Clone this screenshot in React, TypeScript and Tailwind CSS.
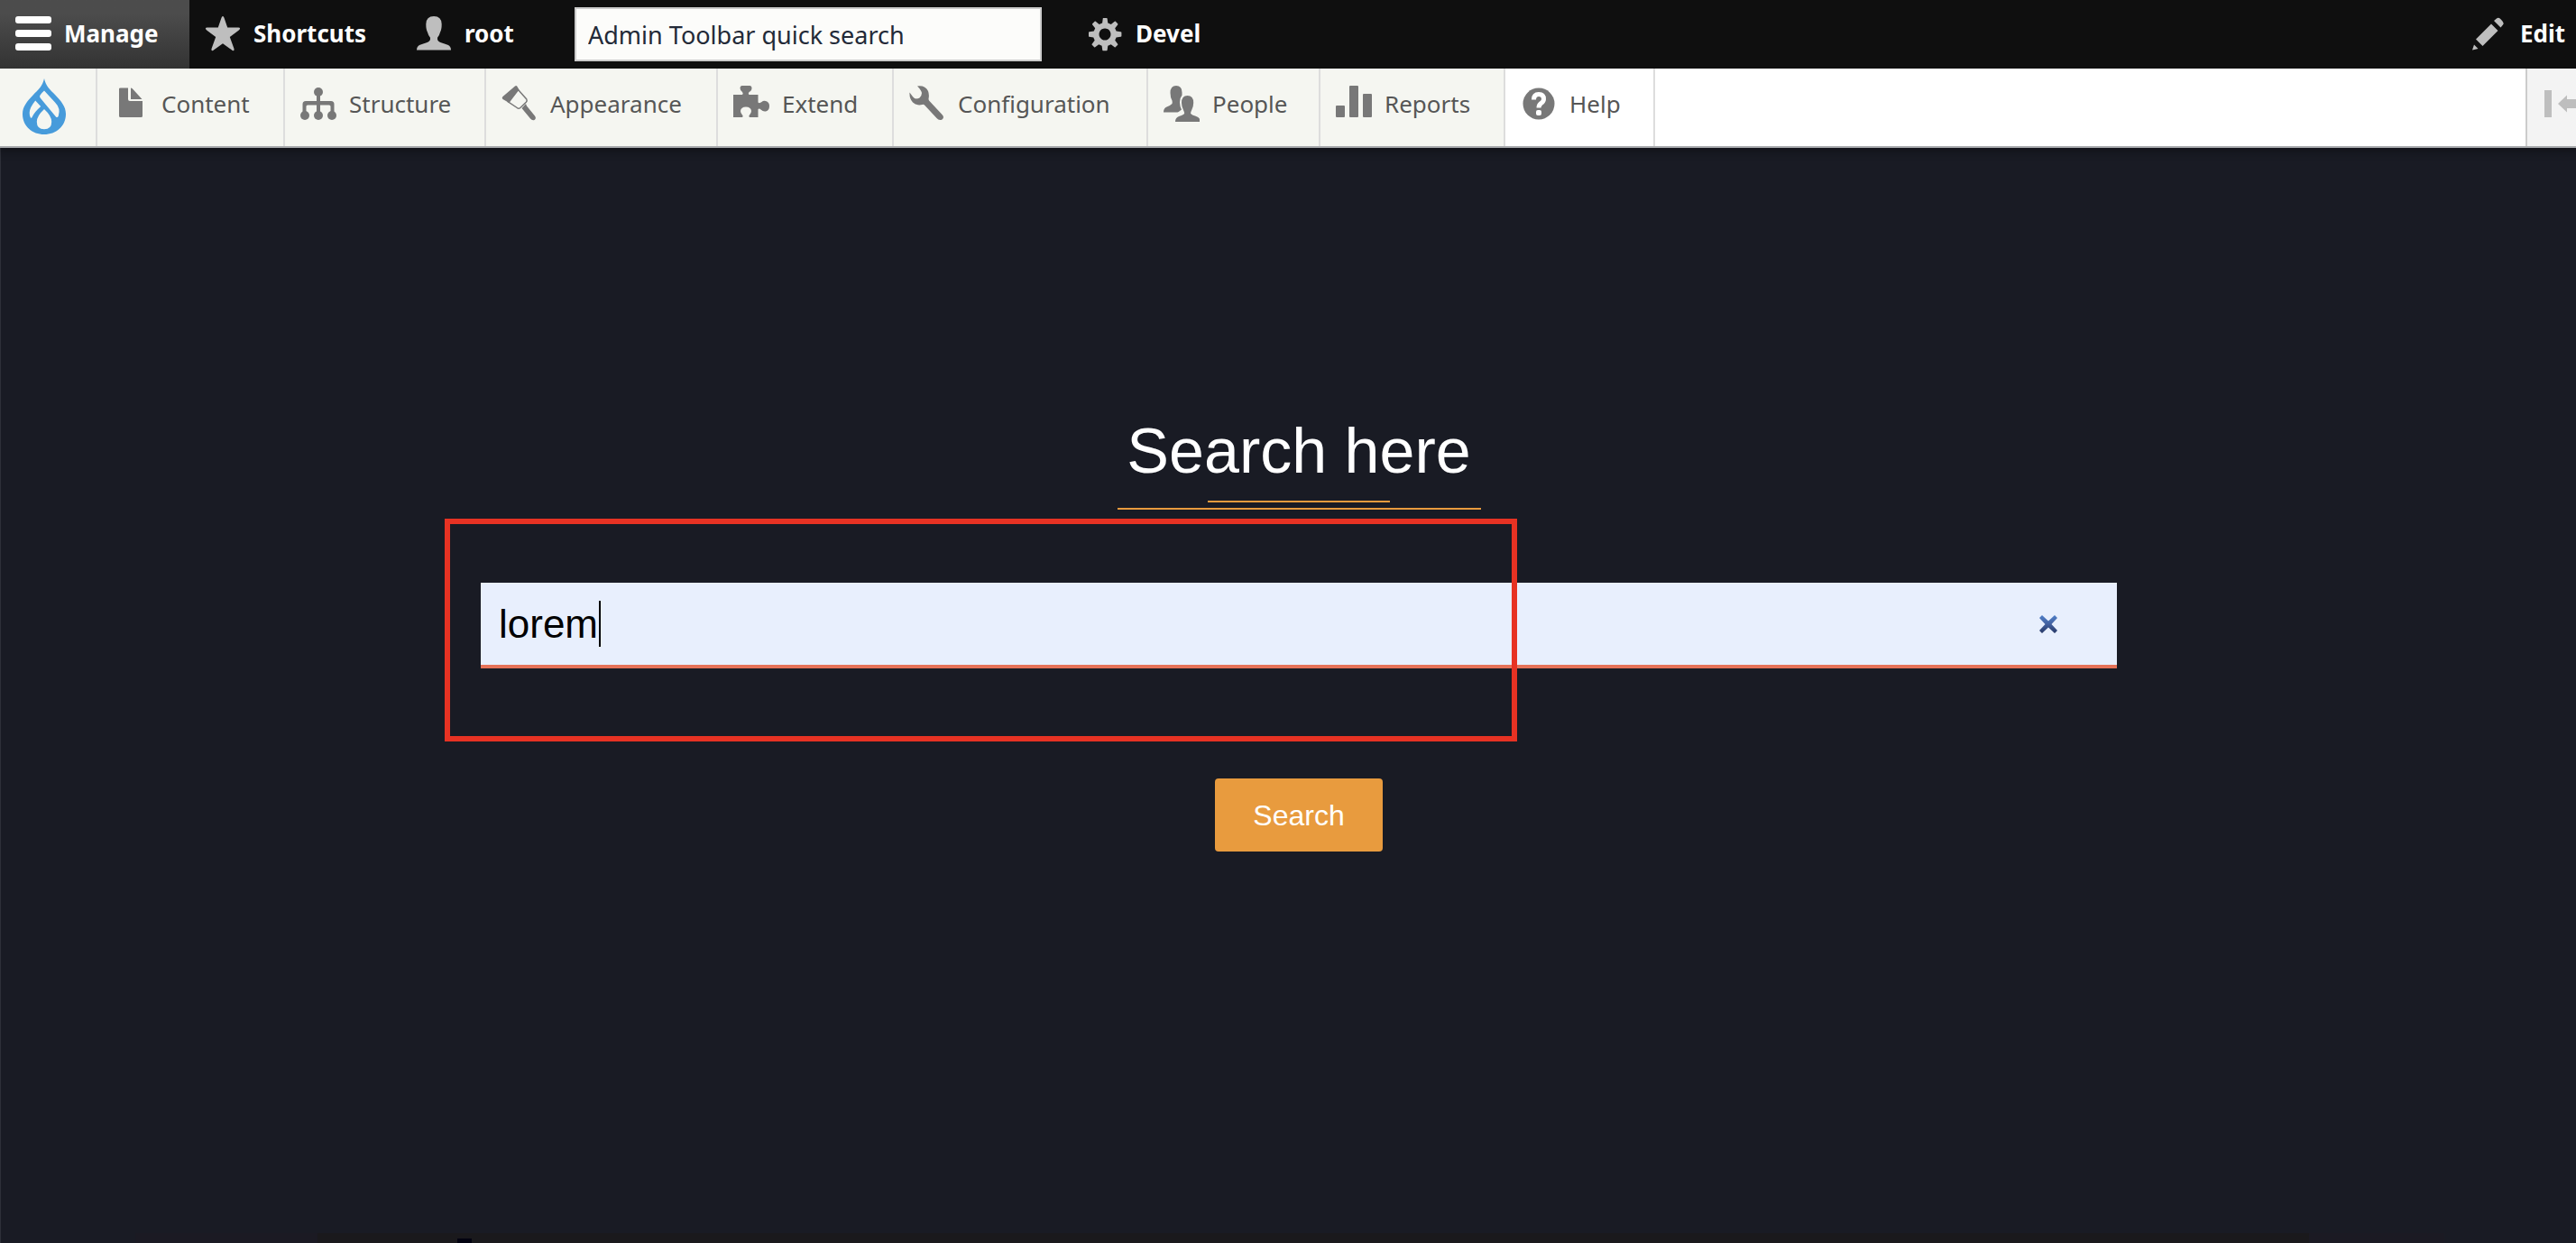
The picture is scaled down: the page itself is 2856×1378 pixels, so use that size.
import React from "react";

const lucida = "font-['Noto_Sans','Open_Sans',sans-serif]";
const helvetica = "font-['Liberation_Sans',Arial,sans-serif]";

function MenuIcon() {
  return (
    <svg className="h-10 w-10" viewBox="0 0 40 40" fill="#fff" aria-hidden="true">
      <rect y="1" width="40" height="8" rx="3" />
      <rect y="16" width="40" height="8" rx="3" />
      <rect y="31" width="40" height="8" rx="3" />
    </svg>
  );
}

function StarIcon() {
  return (
    <svg className="h-10 w-10" viewBox="0 0 40 40" fill="#bebebe" aria-hidden="true">
      <path d="M20 1q1 0 1.600 2l3.600 10.500h12q2.300 0 1.800 1.500q-.2.800-1.500 1.700L27.800 24l4.500 12.500q.6 2-.2 2.500q-.8.500-2.300-.7L20 31.200l-9.800 7.100q-1.500 1.200-2.300.7q-.8-.5-.2-2.500L12.200 24L2.500 16.700Q1.200 15.800 1 15Q.5 13.500 2.800 13.500h12l3.600-10.500q.6-2 1.600-2z" />
    </svg>
  );
}

function PersonIcon() {
  return (
    <svg className="h-10 w-10" viewBox="0 0 40 40" fill="#bebebe" aria-hidden="true">
      <path d="M1 38.500q0-4 3-5.500q3-1.200 8-2.800q4-1.500 4-4v-1.500q-2-2-3-6q-1.700-3-1.700-9Q11.500 1 20 1t8.700 8.700q0 6-1.700 9q-1 4-3 6v1.500q0 2.500 4 4q5 1.600 8 2.800q3 1.500 3 5.500z" />
    </svg>
  );
}

function GearIcon() {
  return (
    <svg className="h-10 w-10" viewBox="0 0 40 40" fill="#bebebe" aria-hidden="true">
      <path
        fillRule="evenodd"
        d="M18 3h4q.6 0 .7 1l.6 4.500 3.500 1.400 4-3.100q.6-.5 1 0l2.400 2.500q.5.500 0 1.100l-3 3.900 1.400 3.200 4.900.700q.9.100.9.800v4q0 .6-.9.700l-4.900.8-1.400 3.300 3 4q.5.600 0 1l-2.500 2.500q-.5.500-1 0l-4-3-3.400 1.400-.6 4.600q-.1 1-.8 1h-4q-.6 0-.7-1l-.6-4.600-3.400-1.400-4 3q-.6.500-1 0l-2.500-2.500q-.5-.5 0-1l3-4-1.400-3.300-4.900-.8Q2 23.600 2 23v-4q0-.7.900-.8l4.900-.7 1.400-3.200-3-3.900q-.5-.6 0-1.100l2.500-2.500q.5-.5 1 0l4 3.100 3.400-1.400.6-4.500q.1-1 .3-1zM20 14.500a6.500 6.500 0 1 0 .01 0z"
      />
    </svg>
  );
}

function PencilIcon() {
  return (
    <svg className="h-10 w-10" viewBox="0 0 40 40" fill="#bebebe" aria-hidden="true">
      <path d="M27 6l3-2.500q2-1.500 4 .3l2.500 2.700q1.800 2 .5 4L34.500 13.500zM24 9.500l7.500 7.500L14.500 34 7 26.500zM5 32.500l4.500 4.500L3 38.500z" />
    </svg>
  );
}

function DropIcon() {
  return (
    <svg className="h-[62px] w-12" viewBox="0 0 48 62" aria-hidden="true">
      <path
        fill="#479bdb"
        d="M24 0C25.500 8 31 13 36 18C43 25.500 48 31 48 39.500C48 53 37 62 24 62S0 53 0 39.500C0 31 5 25.500 12 18C17 13 22.500 8 24 0z"
      />
      <path fill="#f5f6f1" d="M24 13.500Q20.500 16.500 19.200 19q-.6 1.400.8 3L37 42.500q1.800 1.500 2.800-1Q42.500 33 36 26.500z" />
      <path fill="#f5f6f1" d="M14.200 24.500q-6.500 8-6.500 13.500q0 3 1 5t2.200-.7q2.500-5.300 9.300-11.300z" />
      <path fill="#f5f6f1" d="M24 34q8.200 7.500 8.200 14q0 8.200-8.200 8.200t-8.200-8.200q0-6.500 8.200-14z" />
    </svg>
  );
}

function ContentIcon() {
  return (
    <svg className="h-10 w-10" viewBox="0 0 40 40" fill="#787878" aria-hidden="true">
      <path d="M8.500 2.500H17V15q0 2 2 2h14v16.500q0 1.500-1.500 1.500H8.500Q7 35 7 33.500v-30q0-1 1.500-1zM20 2.500q1 0 2 1L32.500 15H20z" />
    </svg>
  );
}

function StructureIcon() {
  return (
    <svg className="h-10 w-10" viewBox="0 0 40 40" fill="#787878" aria-hidden="true">
      <path d="M18 10h4v7h12q3.500 0 3.500 3.500V29h-4v-6q0-1.500-1.500-1.500H22V30h-4v-8.500H8Q6.500 21.500 6.500 23v6h-4v-8.500Q2.500 17 6 17h12z" />
      <circle cx="20" cy="7" r="5" />
      <circle cx="5" cy="33" r="5" />
      <circle cx="20" cy="33" r="5" />
      <circle cx="35" cy="33" r="5" />
    </svg>
  );
}

function AppearanceIcon() {
  return (
    <svg className="h-10 w-10" viewBox="0 0 40 40" aria-hidden="true">
      <path d="M18.500 4.500L27.800 15q1 1.800-.5 3.300l-6.500 6.200q-1.800 1.500-3.500 0L7 17.500z" fill="none" stroke="#787878" strokeWidth="1.500" />
      <path fill="#787878" d="M15 .500q1.500-1 2.500.5l2 3.500L8.500 19 1.500 15q-1.500-1.500 0-3zM22.500 25l4.500-5 1 2.500 9 11q2 3-.5 4.500-2.500 1-4.500-1.500z" />
    </svg>
  );
}

function ExtendIcon() {
  return (
    <svg className="h-10 w-10" viewBox="0 0 40 40" fill="#787878" aria-hidden="true">
      <path d="M0 10h10q1.500-1 0-3Q7.500 5.500 7.500 2.500Q7.500 0 9.500 0h9q2 0 2 2.500q0 3-3 4.500q-1.500 2 0 3h10v8.500q1.500 1.500 4-.5Q33.500 16 36 17q4 1 4 5.500q0 5-4 6q-3 .5-5.500-2q-1.500-1.500-3-.5v9h-9.500q-1.500-1.500 0-2.500q2-2 2-4.500q-.5-4.500-6-4.500t-6 4.500q0 2.500 2 4.500q1.500 1 0 2.500H0z" />
    </svg>
  );
}

function WrenchIcon() {
  return (
    <svg className="h-10 w-10" viewBox="0 0 40 40" fill="#787878" aria-hidden="true">
      <path d="M9 .500Q18-.500 21 6q1.500 4 .5 8.500q0 1.500 1 2.500l14 15q3 3 0 5.500q-3.500 1.500-6-1.500L17 21.500q-1-1-2.500-.5q-6 1.500-10.500-2.500Q0 14 .5 7.500q4 5.500 5.500 6.500q2 1 5.500-.5q2.500-2.500 2.500-5.500q-.5-3-5-7.500z" />
    </svg>
  );
}

function PeopleIcon() {
  return (
    <svg className="h-10 w-10" viewBox="0 0 40 40" fill="#787878" aria-hidden="true">
      <path d="M14 0q6.500 0 6.500 7.500v3q-2.500 3-2.500 8q0 4 2 8q-3 2.500-4.500 3H0q0-4 2.500-5.500q5-1.800 7-4q.5-2 0-3.500Q7.500 13 7.500 8Q7.500 0 14 0z" />
      <path d="M26.500 11q6.700 0 6.700 8q0 4-2 8q-1.500 3-1 4q1 1.500 5.500 2.700q5 1.300 5 6.300H13q0-4.500 4-6q5-1.500 6-3q.5-1-1-4q-2-4-2-8q0-8 6.500-8z" />
    </svg>
  );
}

function ReportsIcon() {
  return (
    <svg className="h-10 w-10" viewBox="0 0 40 40" fill="#787878" aria-hidden="true">
      <rect y="22" width="10" height="13" rx="1" />
      <rect x="15" width="10" height="35" rx="1" />
      <rect x="30" y="9" width="10" height="26" rx="1" />
    </svg>
  );
}

function HelpIcon() {
  return (
    <svg className="h-10 w-10" viewBox="0 0 40 40" aria-hidden="true">
      <circle cx="20" cy="20" r="17.500" fill="#787878" />
      <path d="M14.500 15.500q0-6 5.500-6t5.500 5.500q0 2.500-3 4.500-2.500 2-2.500 5" fill="none" stroke="#fff" strokeWidth="5" />
      <rect x="17" y="27" width="6" height="6" rx="2" fill="#fff" />
    </svg>
  );
}

const trayItems = [
  { label: "Content", icon: <ContentIcon />, width: "w-[208px]" },
  { label: "Structure", icon: <StructureIcon />, width: "w-[223px]" },
  { label: "Appearance", icon: <AppearanceIcon />, width: "w-[257px]" },
  { label: "Extend", icon: <ExtendIcon />, width: "w-[195px]" },
  { label: "Configuration", icon: <WrenchIcon />, width: "w-[282px]" },
  { label: "People", icon: <PeopleIcon />, width: "w-[191px]" },
  { label: "Reports", icon: <ReportsIcon />, width: "w-[205px]" },
  { label: "Help", icon: <HelpIcon />, width: "w-[166px]" },
];

function Toolbar() {
  return (
    <header className={`relative shadow-[0_0_10px_4px_rgba(0,0,0,0.33)] ${lucida}`}>
      <nav className="flex h-[76px] bg-[#0f0f0f] text-[26px] leading-9 font-bold text-white" aria-label="Toolbar">
        <a href="#manage" className="flex w-[210px] items-center gap-3.5 bg-linear-to-b from-[#4c4c4c] from-20% to-[#333] pb-0.5 pl-[17px]">
          <MenuIcon />
          <span>Manage</span>
        </a>
        <a href="#shortcuts" className="flex w-[234px] items-center gap-3.5 pb-0.5 pl-[17px]">
          <StarIcon />
          <span>Shortcuts</span>
        </a>
        <a href="#user" className="flex w-[193px] items-center gap-3.5 pb-0.5 pl-[17px]">
          <PersonIcon />
          <span>root</span>
        </a>
        <input
          type="text"
          aria-label="Admin Toolbar quick search"
          placeholder="Admin Toolbar quick search"
          className="mt-2 h-[60px] w-[518px] border-2 border-[#ccc] bg-[#fcfcfa] px-[13px] text-[27px] font-normal text-[#232a38] outline-none placeholder:text-[#232a38] placeholder:opacity-100"
        />
        <a href="#devel" className="ml-[50px] flex items-center gap-3.5 pb-0.5">
          <GearIcon />
          <span>Devel</span>
        </a>
        <button type="button" className="ml-auto flex items-center gap-4 pr-3 pb-0.5">
          <PencilIcon />
          <span>Edit</span>
        </button>
      </nav>
      <nav className="flex h-[88px] border-b-2 border-[#a6a8ab] bg-white text-[26px] leading-9 text-[#565656]" aria-label="Administration menu">
        <a href="#home" aria-label="Drupal" className="flex w-[108px] justify-start border-r-2 border-[#ddd] bg-[#f5f6f1] pt-[11px] pl-[25px]">
          <DropIcon />
        </a>
        {trayItems.map((item) => (
          <a
            key={item.label}
            href={`#${item.label.toLowerCase()}`}
            className={`flex items-start gap-3.5 border-r-2 border-[#ddd] pl-[17px] ${item.width} ${item.label === "Help" ? "bg-white" : "bg-[#f5f6f1]"}`}
          >
            <span className="mt-[19px]">{item.icon}</span>
            <span className="mt-[21px]">{item.label}</span>
          </a>
        ))}
        <button type="button" aria-label="Vertical orientation" className="ml-auto flex w-14 overflow-hidden border-l-2 border-[#ccc] bg-[#f3f3f3] pt-6 pl-[19px]">
          <svg className="h-[30px] w-9 shrink-0" viewBox="0 0 36 30" fill="#bebebe" aria-hidden="true">
            <path d="M0 0h8v30H0zM15 15l10-9.500V10h11v10H25v4.500z" />
          </svg>
        </button>
      </nav>
    </header>
  );
}

function SearchForm() {
  return (
    <form className="flex flex-col items-center" onSubmit={(e) => e.preventDefault()}>
      <div className="relative mt-4 w-full">
        <input
          type="text"
          aria-label="Search"
          defaultValue="lorem"
          className="block h-[95px] w-full border-b-4 border-[#e57258] bg-[#e8effd] px-5 text-[44px] text-black outline-none"
        />
        <span className="absolute top-5 left-[131px] h-[51px] w-0.5 bg-black" />
        <button type="button" aria-label="Clear" className="absolute top-9 right-[66px]">
          <svg className="h-5 w-5" viewBox="0 0 20 20" aria-hidden="true">
            <defs>
              <linearGradient id="cross" x1="0" y1="0" x2="0" y2="1">
                <stop offset="0" stopColor="#4f7fc8" />
                <stop offset=".5" stopColor="#43609f" />
                <stop offset="1" stopColor="#263765" />
              </linearGradient>
            </defs>
            <path fill="url(#cross)" d="M3 0l7 6.500L17 0l3 3-6.500 7 6.500 7-3 3-7-6.500L3 20l-3-3 6.500-7L0 3z" />
          </svg>
        </button>
        <div className="pointer-events-none absolute -top-[71px] -left-10 h-[247px] w-[1189px] border-6 border-[#e73223]" />
      </div>
      <button type="submit" className="mt-[122px] h-[81px] w-[186px] rounded-[4px] bg-[#e89b3e] text-[32px] text-white">
        Search
      </button>
    </form>
  );
}

export default function App() {
  return (
    <div className="flex min-h-screen flex-col bg-[#191b24]">
      <Toolbar />
      <div className="flex flex-1 flex-col border-l border-[#2e3039]">
        <main className={`mr-[509px] ml-[532px] flex-1 pt-[288px] ${helvetica}`}>
          <div className="flex flex-col items-center pb-[65px]">
            <h1 className="text-[70px] leading-[96px] text-white">Search here</h1>
            <div className="mt-[7px] h-0.5 w-[202px] bg-[#e89b3e]" />
            <div className="mt-1.5 h-0.5 w-[403px] bg-[#e89b3e]" />
          </div>
          <SearchForm />
        </main>
        <footer className="mr-[146px] ml-[149px] h-[11px] bg-[#1b1a23] pr-[150px] pl-[202px]">
          <div className="h-full bg-[#1a191c] pt-1.5 pl-[155px]">
            <div className="h-[5px] w-4 bg-[#020210]" />
          </div>
        </footer>
      </div>
    </div>
  );
}
